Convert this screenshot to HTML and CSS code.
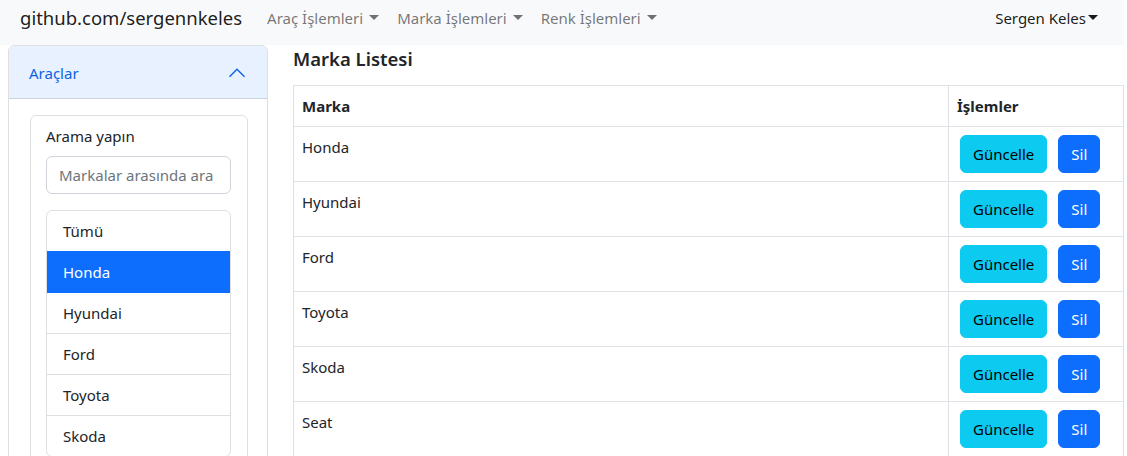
FILE: index.html
```html
<!DOCTYPE html>
<html lang="tr">
<head>
<meta charset="utf-8">
<title>Marka Listesi</title>
<link rel="stylesheet" href="styles.css">
</head>
<body>
<div class="wrap">
  <nav class="navbar">
    <a class="brand" href="#">github.com/sergennkeles</a>
    <ul class="nav">
      <li class="nav-link dropdown">Araç İşlemleri</li>
      <li class="nav-link dropdown">Marka İşlemleri</li>
      <li class="nav-link dropdown">Renk İşlemleri</li>
    </ul>
    <div class="user dropdown">Sergen Keles</div>
  </nav>
  <div class="page">
    <aside class="accordion">
      <div class="acc-button">
        <span>Araçlar</span>
        <svg class="chev" width="20" height="20" viewBox="0 0 16 16"><path d="M2 11 L8 5 L14 11" fill="none" stroke="#0c63e4" stroke-width="1.1"/></svg>
      </div>
      <div class="acc-body">
        <div class="card">
          <label class="form-label">Arama yapın</label>
          <input class="form-control" type="text" placeholder="Markalar arasında ara">
          <ul class="list-group">
            <li class="list-item">Tümü</li>
            <li class="list-item active">Honda</li>
            <li class="list-item">Hyundai</li>
            <li class="list-item">Ford</li>
            <li class="list-item">Toyota</li>
            <li class="list-item">Skoda</li>
          </ul>
        </div>
      </div>
    </aside>
    <main class="main">
      <h5 class="title">Marka Listesi</h5>
      <table class="table">
        <thead>
          <tr><th>Marka</th><th class="ops">İşlemler</th></tr>
        </thead>
        <tbody>
          <tr><td>Honda</td><td><div class="btns"><button class="btn btn-info">Güncelle</button><button class="btn btn-primary">Sil</button></div></td></tr>
          <tr><td>Hyundai</td><td><div class="btns"><button class="btn btn-info">Güncelle</button><button class="btn btn-primary">Sil</button></div></td></tr>
          <tr><td>Ford</td><td><div class="btns"><button class="btn btn-info">Güncelle</button><button class="btn btn-primary">Sil</button></div></td></tr>
          <tr><td>Toyota</td><td><div class="btns"><button class="btn btn-info">Güncelle</button><button class="btn btn-primary">Sil</button></div></td></tr>
          <tr><td>Skoda</td><td><div class="btns"><button class="btn btn-info">Güncelle</button><button class="btn btn-primary">Sil</button></div></td></tr>
          <tr><td>Seat</td><td><div class="btns"><button class="btn btn-info">Güncelle</button><button class="btn btn-primary">Sil</button></div></td></tr>
        </tbody>
      </table>
    </main>
  </div>
</div>
</body>
</html>
```
FILE: styles.css
```css
* { box-sizing: border-box; }
html, body { margin: 0; padding: 0; }
body {
  font-family: "Noto Sans", "Open Sans", sans-serif;
  font-size: 15px;
  line-height: 24px;
  color: #212529;
  background: #fff;
  overflow: hidden;
}
.wrap { width: 1124px; }
.navbar {
  display: flex;
  align-items: center;
  height: 45px;
  padding: 0 26px 9px 20px;
  background: #f8f9fa;
}
.brand {
  font-size: 18.5px;
  line-height: 36px;
  color: rgba(0,0,0,.9);
  text-decoration: none;
  margin-right: 16px;
}
.nav { display: flex; list-style: none; margin: 0; padding: 0; flex: 1; }
.nav-link {
  padding: 0 9px;
  line-height: 36px;
  color: rgba(0,0,0,.55);
}
.dropdown::after {
  content: "";
  display: inline-block;
  margin-left: 6px;
  vertical-align: .255em;
  border-top: 5px solid;
  border-right: 5px solid transparent;
  border-left: 5px solid transparent;
}
.user { line-height: 36px; color: rgba(0,0,0,.9); }
.user.dropdown::after { margin-left: 2px; }

.page { display: flex; padding-left: 8px; gap: 25px; align-items: flex-start; }
.accordion {
  width: 260px;
  flex: none;
  border: 1px solid rgba(0,0,0,.125);
  border-radius: 6px 6px 0 0;
  height: 420px;
}
.acc-button {
  display: flex;
  align-items: center;
  justify-content: space-between;
  padding: 15px 20px 13px 20px;
  background: #e7f1ff;
  color: #0c63e4;
  border-bottom: 1px solid rgba(0,0,0,.125);
  border-radius: 5px 5px 0 0;
}
.chev { display: block; }
.acc-body { padding: 16px 19px 16px 21px; }
.card {
  border: 1px solid rgba(0,0,0,.125);
  border-radius: 6px;
  padding: 8px 16px 16px 15px;
}
.form-label { display: block; margin-bottom: 8px; }
.form-control {
  display: block;
  width: 100%;
  height: 38px;
  padding: 6px 12px;
  font: inherit;
  color: #212529;
  border: 1px solid #ced4da;
  border-radius: 6px;
}
.form-control::placeholder { color: #6c757d; }
.list-group {
  list-style: none;
  margin: 16px 0 0 0;
  padding: 0;
  border: 1px solid rgba(0,0,0,.125);
  border-radius: 6px;
}
.list-item {
  padding: 8px 16px;
  border-top: 1px solid rgba(0,0,0,.125);
}
.list-item:first-child { border-top: 0; }
.list-item.active {
  background: #0d6efd;
  color: #fff;
  border-top-color: #0d6efd;
}
.list-item.active + .list-item { border-top-color: #0d6efd; }

.main { flex: 1; min-width: 0; }
.title {
  font-size: 18.5px;
  font-weight: 600;
  line-height: 24px;
  margin: 2px 0 14px 0;
}
.table {
  width: 100%;
  border-collapse: collapse;
  border: 1px solid #dee2e6;
}
.table th, .table td {
  border: 1px solid #dee2e6;
  padding: 8px;
  text-align: left;
  vertical-align: top;
}
.table th { font-weight: 700; }
.ops { width: 175px; }
.btns { display: flex; gap: 11px; padding-left: 3px; }
.btn {
  font: inherit;
  line-height: 24px;
  padding: 6px 12px;
  border: 1px solid transparent;
  border-radius: 6px;
}
.btn-info { background: #0dcaf0; border-color: #0dcaf0; color: #000; }
.btn-primary { background: #0d6efd; border-color: #0d6efd; color: #fff; }
```
